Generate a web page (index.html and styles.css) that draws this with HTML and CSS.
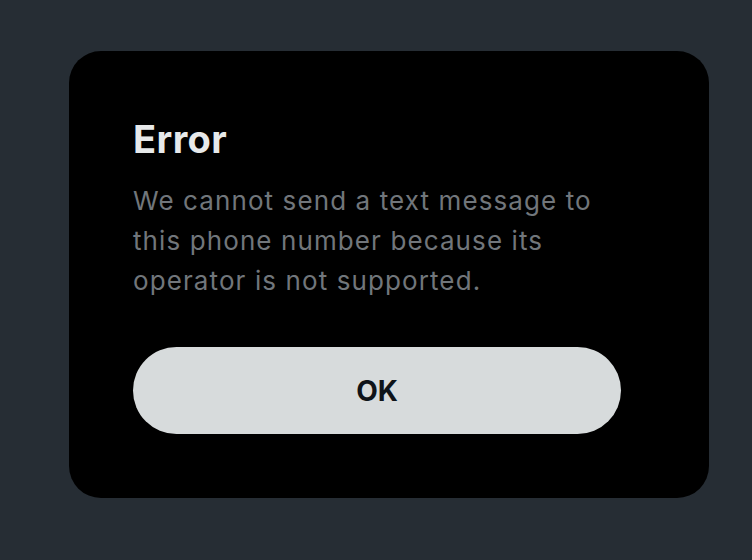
FILE: index.html
```html
<!DOCTYPE html>
<html lang="en">
<head>
<meta charset="utf-8">
<title>Error</title>
<link rel="stylesheet" href="styles.css">
</head>
<body>
  <div class="dialog" role="alertdialog">
    <h1 class="title">Error</h1>
    <p class="message">We cannot send a text message to this phone number because its operator is not supported.</p>
    <button class="ok">OK</button>
  </div>
</body>
</html>
```

FILE: styles.css
```css
html, body {
  margin: 0;
  padding: 0;
}
body {
  background: #262d34;
  width: 752px;
  height: 560px;
  box-sizing: border-box;
  padding: 51px 0 0 69px;
  font-family: Inter, "Noto Sans", sans-serif;
}
.dialog {
  width: 640px;
  height: 447px;
  box-sizing: border-box;
  background: #000;
  border-radius: 32px;
  padding: 65px 88px 64px 64px;
  display: flex;
  flex-direction: column;
}
.title {
  margin: 0;
  font-size: 38px;
  line-height: 46px;
  font-weight: 700;
  color: #e7e9ea;
  letter-spacing: 0.4px;
}
.message {
  margin: 19px 0 0;
  font-size: 26px;
  line-height: 40px;
  color: #71767b;
  letter-spacing: 1.1px;
}
.ok {
  margin-top: auto;
  height: 87px;
  width: 100%;
  border: none;
  border-radius: 44px;
  background: #d7dbdc;
  color: #0f1419;
  font-family: Inter, "Noto Sans", sans-serif;
  font-size: 28px;
  font-weight: 700;
  padding: 0;
}
```
